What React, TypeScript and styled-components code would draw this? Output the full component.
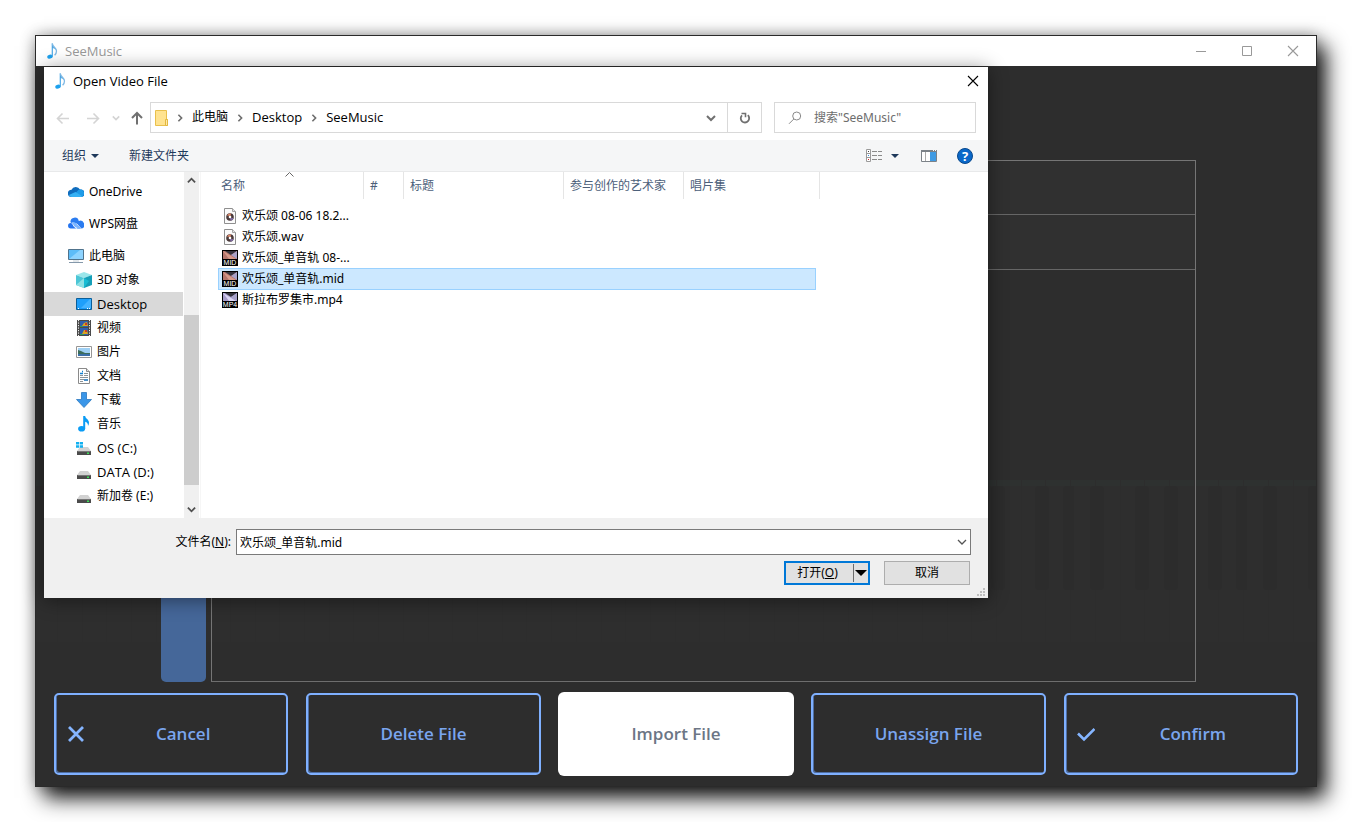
import React from 'react';
import styled, { createGlobalStyle, css } from 'styled-components';

const GlobalStyle = createGlobalStyle`
  *, *::before, *::after { box-sizing: border-box; }
  body {
    margin: 0;
    background: #fff;
    font-family: "Noto Sans", "Noto Sans CJK SC", sans-serif;
    font-size: 12px;
    line-height: 16px;
    color: #000;
  }
  button, input { font: inherit; color: inherit; margin: 0; padding: 0; }
  svg { display: block; flex: none; }
`;

const latinText = css`
  font-family: "Open Sans", "Noto Sans CJK SC", sans-serif;
  font-size: 13px;
`;

const Desktop = styled.div`
  padding: 35px;
`;

const AppWindow = styled.main`
  position: relative;
  border: 1px solid #2a2a2a;
  background: #2d2d2d;
  box-shadow: 9px 11px 20px rgba(0, 0, 0, 0.92), 0 0 14px rgba(0, 0, 0, 0.3);
`;

const TitleBar = styled.header`
  display: flex;
  align-items: center;
  height: 30px;
  padding-left: 9px;
  background: #fff;
  color: #999;
`;

const TitleText = styled.h1`
  flex: 1;
  margin: 0 0 0 4px;
  font-weight: 400;
  ${latinText}
`;

const BareButton = styled.button`
  display: flex;
  align-items: center;
  justify-content: center;
  border: 0;
  background: transparent;
`;

const CaptionButton = styled(BareButton)`
  width: 46px;
  height: 28px;
`;

const Stage = styled.div`
  position: relative;
  padding: 94px 18px 11px;
`;

const PianoBackdrop = styled.svg`
  position: absolute;
  left: 0;
  top: 414px;
  width: 100%;
  height: 162px;
`;

const Library = styled.section`
  position: relative;
  display: flex;
  gap: 5px;
  margin: 0 102px 11px 107px;
`;

const SideTab = styled.div`
  width: 45px;
  border-radius: 5px;
  background: #456799;
`;

const FilePanel = styled.div`
  flex: 1;
  height: 522px;
  border: 1px solid #757575;
  border-bottom-color: #6e6e6e;
`;

const PanelRow = styled.div`
  height: 54px;
  border-bottom: 1px solid #666;
  background: #303030;
  & + & { height: 55px; }
`;

const Actions = styled.div`
  position: relative;
  display: flex;
  gap: 18px;
`;

const ActionButton = styled.button<{ $filled?: boolean }>`
  display: flex;
  flex: 1;
  align-items: center;
  height: 82px;
  padding: 0 11px;
  gap: 6px;
  border: 2px solid ${(p) => (p.$filled ? '#fff' : '#7fb0ff')};
  border-radius: 5px;
  background: ${(p) => (p.$filled ? '#fff' : 'transparent')};
  box-shadow: ${(p) => (p.$filled ? '0 0 0 1px #fff' : 'inset 1px -1px 0 #4f6ea3')};
  color: ${(p) => (p.$filled ? '#6c7685' : '#7aa5ee')};
  font-family: "Open Sans", sans-serif;
  font-size: 17px;
  font-weight: 600;
  line-height: 24px;
`;

const ActionLabel = styled.span`
  flex: 1;
  text-align: center;
`;

const Dialog = styled.section`
  position: absolute;
  left: 8px;
  right: 328px;
  top: 31px;
  background: #fff;
  box-shadow: 0 2px 18px rgba(0, 0, 0, 0.45);
`;

const DialogTitle = styled.header`
  display: flex;
  align-items: center;
  height: 30px;
  padding: 0 0 2px 9px;
`;

const DialogHeading = styled.h2`
  flex: 1;
  margin: 0 0 0 4px;
  font-weight: 400;
  ${latinText}
`;

const CloseButton = styled(BareButton)`
  width: 30px;
  height: 28px;
`;

const NavRow = styled.nav`
  display: flex;
  align-items: center;
  height: 43px;
  padding: 0 12px 2px 4px;
`;

const NavButton = styled(BareButton)<{ $w: number }>`
  width: ${(p) => p.$w}px;
  height: 30px;
`;

const AddressBar = styled.div`
  display: flex;
  flex: 1;
  align-items: center;
  height: 31px;
  margin-right: 12px;
  padding-left: 4px;
  border: 1px solid #d9d9d9;
`;

const Crumb = styled(BareButton)<{ $latin?: boolean }>`
  padding-bottom: 1px;
  ${(p) => p.$latin && latinText}
`;

const Separator = styled.span`
  display: flex;
  justify-content: center;
  width: 24px;
`;

const Spacer = styled.span`
  flex: 1;
`;

const RefreshButton = styled(BareButton)`
  width: 34px;
  height: 29px;
  border-left: 1px solid #d9d9d9;
`;

const SearchBox = styled.label`
  display: flex;
  align-items: center;
  width: 202px;
  height: 31px;
  padding-left: 13px;
  gap: 12px;
  border: 1px solid #d9d9d9;
`;

const SearchInput = styled.input`
  flex: 1;
  min-width: 0;
  border: 0;
  outline: 0;
  background: transparent;
  &::placeholder { color: #6d6d6d; opacity: 1; }
`;

const Toolbar = styled.div`
  display: flex;
  align-items: center;
  height: 32px;
  padding: 0 15px 0 18px;
  border-bottom: 1px solid #e8e9ea;
  background: #f5f6f7;
  color: #1e395b;
`;

const ToolButton = styled(BareButton)<{ $end?: number }>`
  gap: 5px;
  margin-right: ${(p) => p.$end ?? 0}px;
`;

const Explorer = styled.div`
  display: flex;
  height: 346px;
`;

const Tree = styled.ul`
  width: 139px;
  margin: 0;
  padding: 8px 0 0;
  list-style: none;
`;

const TreeItem = styled.li<{ $root?: boolean; $gap?: boolean; $latin?: boolean; $selected?: boolean }>`
  display: flex;
  align-items: center;
  height: 24px;
  gap: 5px;
  margin-bottom: ${(p) => (p.$gap ? 8 : 0)}px;
  padding-left: ${(p) => (p.$root ? 24 : 32)}px;
  background: ${(p) => (p.$selected ? '#d9d9d9' : 'transparent')};
  ${(p) => p.$latin && latinText}
`;

const ScrollBar = styled.div`
  display: flex;
  flex-direction: column;
  width: 17px;
  margin-left: 1px;
  padding: 0 1px 0 0;
  border-right: 1px solid #f6f6f6;
`;

const ScrollTrack = styled.div`
  display: flex;
  flex: 1;
  flex-direction: column;
  align-items: stretch;
  background: #f0f0f0;
`;

const ScrollArrow = styled(BareButton)`
  height: 17px;
`;

const ScrollLane = styled.div`
  flex: 1;
  padding-top: 126px;
`;

const ScrollThumb = styled.div`
  height: 170px;
  background: #cdcdcd;
`;

const FileTable = styled.table`
  display: block;
  margin-left: 17px;
`;

const FileHead = styled.thead`
  display: block;
`;

const HeadRow = styled.tr`
  display: grid;
  grid-template-columns: 146px 40px 160px 120px 136px;
`;

const HeadCell = styled.th<{ $first?: boolean }>`
  position: relative;
  height: 27px;
  padding: 6px 0 0 ${(p) => (p.$first ? 3 : 6)}px;
  border-right: 1px solid #e5e5e5;
  color: #4c607a;
  font-weight: 400;
  text-align: left;
  white-space: nowrap;
`;

const SortMark = styled.svg`
  position: absolute;
  left: 67px;
  top: 0;
`;

const FileBody = styled.tbody`
  display: block;
  padding-top: 6px;
`;

const FileRow = styled.tr<{ $selected?: boolean }>`
  display: flex;
  width: 598px;
  height: 21px;
  ${(p) => p.$selected && css`
    height: 22px;
    margin-bottom: -1px;
    background: #cce8ff;
    outline: 1px solid #99d1ff;
    outline-offset: -1px;
  `}
`;

const FileCell = styled.td`
  display: flex;
  align-items: center;
  gap: 4px;
  padding: 0 0 0 4px;
  white-space: nowrap;
`;

const Footer = styled.footer`
  position: relative;
  height: 80px;
  padding: 11px 17px 0 18px;
  background: #f0f0f0;
`;

const NameRow = styled.div`
  display: flex;
  align-items: center;
  gap: 5px;
`;

const NameLabel = styled.label`
  width: 169px;
  text-align: right;
`;

const ComboBox = styled.div`
  display: flex;
  flex: 1;
  align-items: center;
  height: 26px;
  border: 1px solid #7a7a7a;
  background: #fff;
`;

const NameInput = styled.input`
  flex: 1;
  min-width: 0;
  padding: 2px 0 0 3px;
  border: 0;
  outline: 0;
  background: transparent;
`;

const ComboArrow = styled(BareButton)`
  width: 17px;
  height: 24px;
`;

const ButtonRow = styled.div`
  display: flex;
  justify-content: flex-end;
  gap: 14px;
  margin-top: 6px;
  padding-right: 1px;
`;

const SplitButton = styled.div`
  display: flex;
  align-items: center;
  width: 86px;
  height: 24px;
  border: 2px solid #0078d7;
  background: #e1e1e1;
`;

const OpenButton = styled(BareButton)`
  flex: 1;
  height: 18px;
  padding-right: 4px;
  border-right: 1px solid #6d6d6d;
`;

const OpenMenuButton = styled(BareButton)`
  width: 14px;
  height: 20px;
`;

const CancelButton = styled(BareButton)`
  width: 86px;
  height: 24px;
  border: 1px solid #adadad;
  background: #e1e1e1;
`;

const Grip = styled.svg`
  position: absolute;
  right: 3px;
  bottom: 2px;
`;

const NoteIcon = ({ bold }: { bold?: boolean }) =>
  bold ? (
    <svg width="16" height="16" viewBox="0 0 16 16">
      <ellipse cx="5.6" cy="12.8" rx="3.5" ry="2.8" fill="#0a9cf5" />
      <path d="M7.2 0h2c.2 2.600 3.800 3.500 3.800 6.700 0 1.300-.4 2.400-1 3.300.2-2.300-1-3.800-2.800-4.300V13h-2z" fill="#0a9cf5" />
    </svg>
  ) : (
    <svg width="16" height="16" viewBox="0 0 16 16">
      <ellipse cx="5" cy="13.600" rx="2.800" ry="2" fill="#1ba1ee" transform="rotate(-12 5 13.600)" />
      <path d="M7.300 13.500V.5" stroke="#4aa9e8" strokeWidth="1.200" />
      <path d="M7.300.5C7.500 4 11.500 4.500 11.500 8c0 1.800-.8 3.200-1.900 4.300" fill="none" stroke="#7fb9e4" strokeWidth="1.300" />
      <path d="M7.300 2c.5 2.500 3 3 3.500 5-1-1.300-2-1.800-3.500-2z" fill="#4aa0dc" />
    </svg>
  );

const Cross = ({ color }: { color: string }) => (
  <svg width="12" height="12" viewBox="0 0 12 12">
    <path d="M1 1l10 10M11 1L1 11" stroke={color} strokeWidth="1.100" />
  </svg>
);

const Arrow = ({ kind }: { kind: 'left' | 'right' | 'up' }) => (
  <svg width="14" height="14" viewBox="0 0 14 14" fill="none" stroke={kind === 'up' ? '#707070' : '#d4d4d4'} strokeWidth={kind === 'up' ? 2 : 1.6}>
    {kind === 'left' && <path d="M13 7.500H1.500M6.500 2.500l-5 5 5 5" />}
    {kind === 'right' && <path d="M1 7.500h11.500M7.500 2.500l5 5-5 5" />}
    {kind === 'up' && <path d="M7 13.500V2M2 7l5-5 5 5" />}
  </svg>
);

const Chevron = ({ dir, color, w = 10, stroke = 2 }: { dir: 'up' | 'down' | 'right'; color: string; w?: number; stroke?: number }) => (
  <svg width={w} height={w} viewBox="0 0 10 10" fill="none" stroke={color} strokeWidth={stroke}>
    {dir === 'down' && <path d="M1 3l4 4 4-4" />}
    {dir === 'up' && <path d="M1 7l4-4 4 4" />}
    {dir === 'right' && <path d="M3 1l4 4-4 4" />}
  </svg>
);

const Triangle = ({ w = 8, color = '#1e395b' }: { w?: number; color?: string }) => (
  <svg width={w} height={w / 2} viewBox="0 0 8 4">
    <path d="M0 0h8L4 4z" fill={color} />
  </svg>
);

const FolderIcon = () => (
  <svg width="13" height="16" viewBox="0 0 13 16">
    <path d="M.5.5h11v9h1v6H.5z" fill="#ffe390" stroke="#e9c04c" />
    <path d="M10.500 15.500v-6h2v6z" fill="#ffe9a8" stroke="#e3b840" />
  </svg>
);

const RefreshIcon = () => (
  <svg width="12" height="12" viewBox="0 0 12 12" fill="none" stroke="#707070" strokeWidth="1.800">
    <path d="M3 3.300A4.200 4.200 0 1 0 8.800 3.200" />
    <path d="M2.500 1.500H6.500V5.200" strokeWidth="1.600" />
  </svg>
);

const SearchIcon = () => (
  <svg width="14" height="14" viewBox="0 0 14 14" fill="none" stroke="#8a8a8a">
    <circle cx="8.700" cy="5" r="4" />
    <path d="M5.800 8L1 12.800" />
  </svg>
);

const ViewIcon = () => (
  <svg width="17" height="14" viewBox="0 0 17 14">
    <path d="M.5.5h4v12h-4zM.5 4.500h4M.5 8.500h4" fill="#fff" stroke="#9a9a9a" />
    <path d="M2 2h1v1H2z" fill="#444" />
    <path d="M2 6h1v1H2z" fill="#2a8ae0" />
    <path d="M2 10h1v1H2z" fill="#d22" />
    <path d="M6 2.500h5M12 2.500h4M6 6.500h5M12 6.500h4M6 10.500h5M12 10.500h4" stroke="#8a8a8a" />
  </svg>
);

const PreviewIcon = () => (
  <svg width="16" height="12" viewBox="0 0 16 12">
    <path d="M.5.5h15v11H.5z" fill="#fff" stroke="#7c8288" />
    <path d="M0 0h16v2H0z" fill="#7c8288" />
    <path d="M4.500 2v9" stroke="#aaa" />
    <path d="M9 2h6v9H9z" fill="#3f9be4" />
    <path d="M12 .5h1M14 .5h1" stroke="#fff" />
  </svg>
);

const HelpIcon = () => (
  <svg width="16" height="16" viewBox="0 0 16 16">
    <circle cx="8" cy="8" r="7.500" fill="#0a68c9" stroke="#08488c" />
    <text x="8" y="12.500" textAnchor="middle" fill="#fff" fontSize="13" fontWeight="700">?</text>
  </svg>
);

const OneDriveIcon = () => (
  <svg width="16" height="16" viewBox="0 0 16 16">
    <path d="M3.500 5.800A4.700 4.700 0 0 1 12 5.500a3.500 3.500 0 0 1 1.500 7.500h-10a3.600 3.600 0 0 1 0-7.200z" fill="#0f6cbd" />
    <path d="M9 7.500A3.700 3.700 0 0 1 16 9.500a3.600 3.600 0 0 1-3.500 3.500H4z" fill="#1e9be8" />
    <path d="M.8 11L7.500 8l6.800 4.200c-.5.500-1 .8-1.800.8h-9A3.500 3.500 0 0 1 .8 11z" fill="#36b1f4" />
  </svg>
);

const WpsIcon = () => (
  <svg width="16" height="16" viewBox="0 0 16 16">
    <path d="M2.500 6.200A4.200 4.200 0 0 1 10.800 5a4 4 0 0 1 3 7.500H9.500z" fill="#2b7cf0" />
    <path d="M3.500 6.500C5.500 5.500 8 6.500 9 8.500l3 4H9C7 12.500 7 9 4.500 8.500z" fill="#7db6ff" />
    <path d="M2.800 7c2.700.2 3.400 5.500 6.400 5.500H2.800A2.700 2.700 0 0 1 2.800 7z" fill="#2474f0" />
    <path d="M4 7.300c1.600 1.500 2 4.700 5 5M8.500 7.500l4.500 5" fill="none" stroke="#fff" strokeWidth=".8" />
  </svg>
);

const PcIcon = () => (
  <svg width="16" height="16" viewBox="0 0 16 16">
    <path d="M.5 1.500h15v10H.5z" fill="#5dbcf8" stroke="#50738c" />
    <path d="M1 11L12 2h3v9z" fill="#8dd3ff" />
    <path d="M1 14.500h14" stroke="#8498aa" />
    <path d="M5 13h6" stroke="#c5d0d8" />
  </svg>
);

const CubeIcon = () => (
  <svg width="16" height="16" viewBox="0 0 16 16">
    <path d="M8 0l8 3-8 3-8-3z" fill="#9be6ea" />
    <path d="M0 3l8 3v10l-8-3z" fill="#4cc6d6" />
    <path d="M16 3L8 6v10l8-3z" fill="#159fb8" />
    <path d="M8 6l5 3-5 7z" fill="#18bcd4" />
    <path d="M0 13l8-7v10z" fill="#8ce0e4" />
  </svg>
);

const DesktopIcon = () => (
  <svg width="16" height="16" viewBox="0 0 16 16">
    <path d="M.5 2.500h15v11H.5z" fill="#1f9ffa" stroke="#0b5e98" />
    <path d="M5 12L14 3h1v9z" fill="#45b3ff" />
    <path d="M2 12.500h2M11 12.500h3" stroke="#fff" strokeDasharray="1 1" />
  </svg>
);

const VideoIcon = () => (
  <svg width="16" height="16" viewBox="0 0 16 16">
    <path d="M1 0h14v16H1z" fill="#4a4a4a" />
    <path d="M2.500 0v16M13.500 0v16" stroke="#f4f4f4" strokeDasharray="1.200 1.300" />
    <path d="M4 1h8v6H4zM4 8h8v7H4z" fill="#2f5fae" />
    <path d="M6 6l2-3 3-1 1 4zM6 14l2-4 3 0 1 4z" fill="#d9a520" />
    <path d="M9 3h2v2H9zM9 10h2v2H9z" fill="#cf3a24" />
    <path d="M4 6h3v1H4zM4 14h4v1H4z" fill="#2f9c5a" />
  </svg>
);

const PictureIcon = () => (
  <svg width="16" height="16" viewBox="0 0 16 16">
    <path d="M.5 2.500h15v11H.5z" fill="#fff" stroke="#969696" />
    <path d="M2 4h12v8H2z" fill="#9fd0f4" />
    <path d="M2 9V6l3 1 4 2h5v1H2z" fill="#3c6d5c" />
    <path d="M2 10h12v2H2z" fill="#3b6fa8" />
  </svg>
);

const DocumentIcon = () => (
  <svg width="16" height="16" viewBox="0 0 16 16">
    <path d="M2.500.5h8l3 3v12h-11z" fill="#fff" stroke="#8a8a8a" />
    <path d="M10.500.5v3h3" fill="#ddd" stroke="#8a8a8a" />
    <path d="M4 7.500h3M8 7.500h4M4 9.500h8M4 11.500h8M4 13.500h3M8 5.500h4" stroke="#8d9499" />
    <path d="M4 5.500h3M6 3.500h1" stroke="#1581cf" strokeWidth="1.500" />
    <path d="M8 11h4v2H8z" fill="#4a90c8" />
  </svg>
);

const DownloadIcon = () => (
  <svg width="16" height="16" viewBox="0 0 16 16">
    <path d="M5.500.5h5v7h5L8 15.500.5 7.500h5z" fill="#3a96e8" stroke="#2b78c0" strokeWidth=".8" />
  </svg>
);

const DriveIcon = ({ system }: { system?: boolean }) => (
  <svg width="16" height="16" viewBox="0 0 16 16">
    <path d="M4 7h8l3 4H1z" fill="#d2d2d2" />
    <path d="M1 11h14v4H1z" fill="#4b4b4b" />
    <path d="M1.500 11.500h13" stroke="#777" />
    <path d="M11 12.500h2V14h-2z" fill="#3ce05a" />
    {system && <path d="M0 2h3v2.500H0zM3.700 2H7v2.500H3.700zM0 5.200h3v2.500H0zM3.700 5.200H7v2.500H3.700z" fill="#12b0f0" />}
  </svg>
);

const AudioFileIcon = () => (
  <svg width="16" height="16" viewBox="0 0 16 16">
    <path d="M2.500.5h8l3 3v12h-11z" fill="#fbfbfb" stroke="#8f8f8f" />
    <path d="M10.500.5v3h3" fill="#e2e2e2" stroke="#a5a5a5" />
    <circle cx="8" cy="9" r="3.800" fill="#4a3a3a" />
    <path d="M5 7.500a3.800 3.800 0 0 1 4-2l-.5 2.500z" fill="#e08a6a" />
    <path d="M11.500 10a3.800 3.800 0 0 1-3 2.800L8 10z" fill="#7d6aa0" />
    <circle cx="8" cy="9" r="1.300" fill="#fff" />
  </svg>
);

const MediaFileIcon = ({ kind }: { kind: 'MID' | 'MP4' }) => (
  <svg width="16" height="16" viewBox="0 0 16 16">
    <path d="M0 0h16v16H0z" fill="#000" />
    <path d="M1 1h14v8H1z" fill={kind === 'MID' ? '#b5756c' : '#a79ccb'} />
    <path d="M3 1h12L9 5z" fill="#35333c" />
    <path d="M9 5l6-4v8z" fill="#a8a2c8" />
    <path d="M1 1l13 8H7z" fill={kind === 'MID' ? '#d79a8a' : '#dcd6f4'} />
    <text x="8" y="15" textAnchor="middle" fill="#fff" fontFamily="Liberation Sans, sans-serif" fontSize="7">{kind}</text>
  </svg>
);

const TREE = [
  { name: 'OneDrive', icon: <OneDriveIcon />, root: true, gap: true },
  { name: 'WPS网盘', icon: <WpsIcon />, root: true, gap: true },
  { name: '此电脑', icon: <PcIcon />, root: true },
  { name: '3D 对象', icon: <CubeIcon /> },
  { name: 'Desktop', icon: <DesktopIcon />, latin: true, selected: true },
  { name: '视频', icon: <VideoIcon /> },
  { name: '图片', icon: <PictureIcon /> },
  { name: '文档', icon: <DocumentIcon /> },
  { name: '下载', icon: <DownloadIcon /> },
  { name: '音乐', icon: <NoteIcon bold /> },
  { name: 'OS (C:)', icon: <DriveIcon system />, latin: true },
  { name: 'DATA (D:)', icon: <DriveIcon />, latin: true },
  { name: '新加卷 (E:)', icon: <DriveIcon /> },
];

const FILES = [
  { name: '欢乐颂 08-06 18.2...', icon: <AudioFileIcon /> },
  { name: '欢乐颂.wav', icon: <AudioFileIcon /> },
  { name: '欢乐颂_单音轨 08-...', icon: <MediaFileIcon kind="MID" /> },
  { name: '欢乐颂_单音轨.mid', icon: <MediaFileIcon kind="MID" />, selected: true },
  { name: '斯拉布罗集市.mp4', icon: <MediaFileIcon kind="MP4" /> },
];

const BLACK_KEYS = [16, 61, 90, 134, 162];
const WHITE_KEYS = [21, 46, 70, 95, 120, 144, 169];

const Piano = () => (
  <PianoBackdrop aria-hidden="true">
    <defs>
      <pattern id="octave" width="173" height="162" patternUnits="userSpaceOnUse">
        <rect width="173" height="162" fill="#2e2e2e" />
        <rect width="173" height="6" fill="#2e3130" />
        {WHITE_KEYS.map((x) => (
          <rect key={x} x={x} y="0" width="1" height="162" fill="#2d2d2d" />
        ))}
        {BLACK_KEYS.map((x) => (
          <rect key={x} x={x} y="6" width="14" height="104" rx="2" fill="#2c2c2c" />
        ))}
      </pattern>
    </defs>
    <rect width="100%" height="100%" fill="url(#octave)" />
  </PianoBackdrop>
);

const OpenDialog = () => (
  <Dialog role="dialog" aria-label="Open Video File">
    <DialogTitle>
      <NoteIcon />
      <DialogHeading>Open Video File</DialogHeading>
      <CloseButton aria-label="Close"><Cross color="#000" /></CloseButton>
    </DialogTitle>
    <NavRow>
      <NavButton $w={30} aria-label="Back"><Arrow kind="left" /></NavButton>
      <NavButton $w={30} aria-label="Forward"><Arrow kind="right" /></NavButton>
      <NavButton $w={16} aria-label="Recent"><Chevron dir="down" color="#d4d4d4" w={8} /></NavButton>
      <NavButton $w={26} aria-label="Up"><Arrow kind="up" /></NavButton>
      <AddressBar>
        <FolderIcon />
        <Separator><Chevron dir="right" color="#6d6d6d" w={8} /></Separator>
        <Crumb>此电脑</Crumb>
        <Separator><Chevron dir="right" color="#6d6d6d" w={8} /></Separator>
        <Crumb $latin>Desktop</Crumb>
        <Separator><Chevron dir="right" color="#6d6d6d" w={8} /></Separator>
        <Crumb $latin>SeeMusic</Crumb>
        <Spacer />
        <NavButton $w={32} aria-label="Previous locations"><Chevron dir="down" color="#707070" /></NavButton>
        <RefreshButton aria-label="Refresh"><RefreshIcon /></RefreshButton>
      </AddressBar>
      <SearchBox>
        <SearchIcon />
        <SearchInput type="text" placeholder={'搜索"SeeMusic"'} aria-label="搜索" />
      </SearchBox>
    </NavRow>
    <Toolbar>
      <ToolButton $end={30}>组织<Triangle /></ToolButton>
      <ToolButton>新建文件夹</ToolButton>
      <Spacer />
      <ToolButton $end={8} aria-label="View"><ViewIcon /></ToolButton>
      <ToolButton $end={22} aria-label="View options"><Triangle /></ToolButton>
      <ToolButton $end={20} aria-label="Preview pane"><PreviewIcon /></ToolButton>
      <ToolButton aria-label="Help"><HelpIcon /></ToolButton>
    </Toolbar>
    <Explorer>
      <Tree>
        {TREE.map((t) => (
          <TreeItem key={t.name} $root={t.root} $gap={t.gap} $latin={t.latin} $selected={t.selected}>{t.icon}{t.name}</TreeItem>
        ))}
      </Tree>
      <ScrollBar>
        <ScrollTrack>
          <ScrollArrow aria-label="Scroll up"><Chevron dir="up" color="#505050" w={9} /></ScrollArrow>
          <ScrollLane><ScrollThumb /></ScrollLane>
          <ScrollArrow aria-label="Scroll down"><Chevron dir="down" color="#505050" w={9} /></ScrollArrow>
        </ScrollTrack>
      </ScrollBar>
      <FileTable>
        <FileHead>
          <HeadRow>
            <HeadCell $first>
              名称
              <SortMark width="9" height="5" viewBox="0 0 9 5"><path d="M.5 4.500l4-4 4 4" fill="none" stroke="#666" /></SortMark>
            </HeadCell>
            <HeadCell>#</HeadCell>
            <HeadCell>标题</HeadCell>
            <HeadCell>参与创作的艺术家</HeadCell>
            <HeadCell>唱片集</HeadCell>
          </HeadRow>
        </FileHead>
        <FileBody>
          {FILES.map((f) => (
            <FileRow key={f.name} $selected={f.selected}>
              <FileCell>{f.icon}{f.name}</FileCell>
            </FileRow>
          ))}
        </FileBody>
      </FileTable>
    </Explorer>
    <Footer>
      <NameRow>
        <NameLabel htmlFor="file-name">文件名(<u>N</u>):</NameLabel>
        <ComboBox>
          <NameInput id="file-name" type="text" defaultValue="欢乐颂_单音轨.mid" />
          <ComboArrow aria-label="File list"><Chevron dir="down" color="#555" stroke={1.3} /></ComboArrow>
        </ComboBox>
      </NameRow>
      <ButtonRow>
        <SplitButton>
          <OpenButton><span>打开(<u>O</u>)</span></OpenButton>
          <OpenMenuButton aria-label="Open options"><Triangle w={12} color="#000" /></OpenMenuButton>
        </SplitButton>
        <CancelButton>取消</CancelButton>
      </ButtonRow>
      <Grip width="8" height="8" viewBox="0 0 8 8">
        <path d="M6 0h2v2H6zM3 3h2v2H3zM6 3h2v2H6zM0 6h2v2H0zM3 6h2v2H3zM6 6h2v2H6z" fill="#bfbfbf" />
      </Grip>
    </Footer>
  </Dialog>
);

export default function App() {
  return (
    <>
      <GlobalStyle />
      <Desktop>
        <AppWindow>
          <TitleBar>
            <NoteIcon />
            <TitleText>SeeMusic</TitleText>
            <CaptionButton aria-label="Minimize">
              <svg width="10" height="10" viewBox="0 0 10 10"><path d="M0 5.500h10" stroke="#999" /></svg>
            </CaptionButton>
            <CaptionButton aria-label="Maximize">
              <svg width="10" height="10" viewBox="0 0 10 10"><path d="M.5.5h9v9h-9z" fill="none" stroke="#999" /></svg>
            </CaptionButton>
            <CaptionButton aria-label="Close"><Cross color="#999" /></CaptionButton>
          </TitleBar>
          <Stage>
            <Piano />
            <Library>
              <SideTab />
              <FilePanel>
                <PanelRow />
                <PanelRow />
              </FilePanel>
            </Library>
            <Actions>
              <ActionButton>
                <svg width="18" height="18" viewBox="0 0 18 18"><path d="M2 2l14 14M16 2L2 16" stroke="#85b5ff" strokeWidth="2.800" /></svg>
                <ActionLabel>Cancel</ActionLabel>
              </ActionButton>
              <ActionButton><ActionLabel>Delete File</ActionLabel></ActionButton>
              <ActionButton $filled><ActionLabel>Import File</ActionLabel></ActionButton>
              <ActionButton><ActionLabel>Unassign File</ActionLabel></ActionButton>
              <ActionButton>
                <svg width="18" height="18" viewBox="0 0 18 18"><path d="M1 8.500l6 6L17.500 4" fill="none" stroke="#85b5ff" strokeWidth="2.600" /></svg>
                <ActionLabel>Confirm</ActionLabel>
              </ActionButton>
            </Actions>
          </Stage>
          <OpenDialog />
        </AppWindow>
      </Desktop>
    </>
  );
}
